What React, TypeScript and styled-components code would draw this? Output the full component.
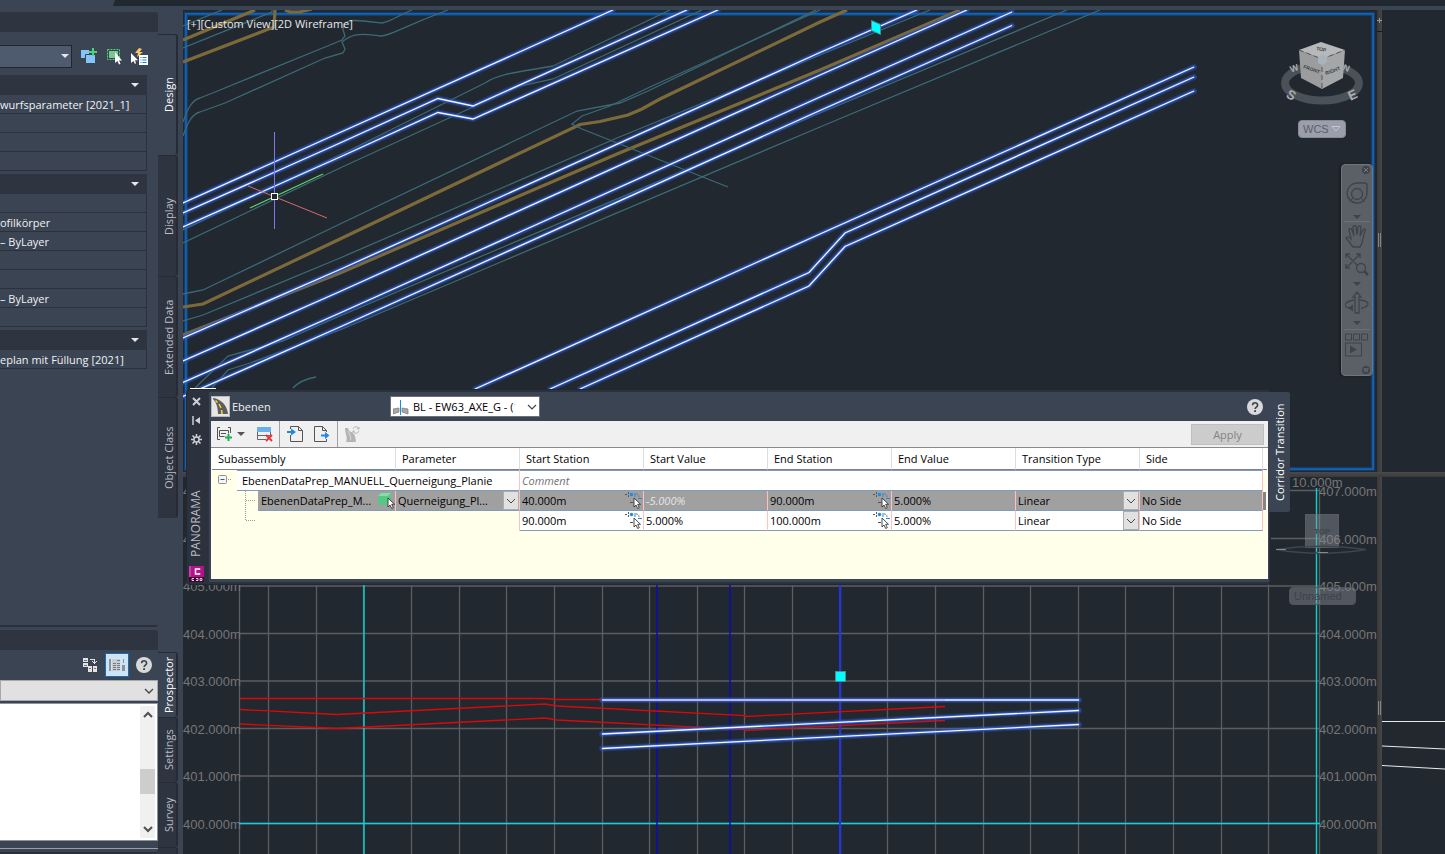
import React from "react";
import styled, { createGlobalStyle, css } from "styled-components";

const c = {
  panel: "#3b4453",
  dark: "#2e3440",
  canvas: "#222830",
  line: "#2b313c",
  text: "#f0f1f3",
  dim: "#b9bdc4",
};

const Global = createGlobalStyle`
  * { box-sizing: border-box; }
  body { margin: 0; background: ${c.panel}; font-family: "Open Sans", "Noto Sans", sans-serif; font-size: 11px; color: ${c.text}; }
  button, select { font: inherit; color: inherit; border: 0; background: none; padding: 0; margin: 0; }
  svg { display: block; }
`;

const Shell = styled.div`
  display: grid;
  grid-template-columns: 183px minmax(0, 1fr);
  grid-template-rows: 10px minmax(0, 1fr);
  height: 100vh;
  overflow: hidden;
`;
const TopStrip = styled.header`
  grid-column: 1 / -1;
  height: 6px;
  margin-left: 113px;
  background: ${c.canvas};
  clip-path: polygon(2px 0, 100% 0, 100% 100%, 0 100%);
`;

/* ---------- docked palettes ---------- */
const Dock = styled.aside`
  display: flex;
  flex-direction: column;
  gap: 3px;
  padding-top: 2px;
  min-height: 0;
`;
const Palette = styled.section<{ $grow?: boolean }>`
  display: grid;
  grid-template-columns: 158px 20px;
  min-height: 0;
  ${(p) => (p.$grow ? "flex: 1;" : "height: 224px;")}
`;
const PaletteBody = styled.div`
  display: flex;
  flex-direction: column;
  min-width: 0;
  border-bottom: 2px solid ${c.line};
  border-bottom-right-radius: 3px;
`;
const TitleBar = styled.div`
  height: 20px;
  flex: none;
  background: ${c.dark};
  border-top-right-radius: 3px;
`;
const Tabs = styled.div`
  display: flex;
  flex-direction: column;
  padding-top: 22px;
  min-height: 0;
  overflow: hidden;
`;
const Tab = styled.button<{ $on?: boolean; $h: number }>`
  flex: none;
  height: ${(p) => p.$h}px;
  display: flex;
  align-items: center;
  justify-content: center;
  padding-right: 4px;
  writing-mode: vertical-rl;
  transform: rotate(180deg);
  line-height: 18px;
  white-space: nowrap;
  color: ${(p) => (p.$on ? "#fff" : c.dim)};
  background: ${(p) => (p.$on ? c.panel : c.dark)};
  border: solid #262b35;
  border-width: 0 0 1px 2px;
  border-radius: 3px 0 0 3px;
`;
const ObjectTools = styled.div`
  display: flex;
  align-items: center;
  justify-content: flex-end;
  height: 43px;
  flex: none;
  gap: 9px;
  padding: 5px 11px 0 0;
`;
const ItemTools = styled.div`
  display: flex;
  align-items: center;
  justify-content: flex-end;
  height: 30px;
  flex: none;
  gap: 7px;
  padding-right: 6px;
`;
const IconButton = styled.button<{ $w?: number; $h?: number }>`
  display: grid;
  place-items: center;
  flex: none;
  width: ${(p) => p.$w ?? 16}px;
  height: ${(p) => p.$h ?? 16}px;
`;
const ObjectSelect = styled.select`
  flex: 1;
  min-width: 0;
  height: 23px;
  appearance: none;
  border: 1px solid #20252e;
  border-left: 0;
  background: #4e5a6d;
`;
const SelectWrap = styled.label`
  position: relative;
  display: flex;
  flex: 1;
  min-width: 0;
  svg { position: absolute; right: 2px; top: 50%; margin-top: -5px; pointer-events: none; }
`;
const Groups = styled.div`
  display: flex;
  flex-direction: column;
  gap: 3px;
  width: 147px;
`;
const GroupHead = styled.button`
  display: flex;
  width: 100%;
  height: 20px;
  align-items: center;
  justify-content: flex-end;
  padding-right: 7px;
  background: ${c.dark};
`;
const PropRow = styled.div`
  height: 19px;
  line-height: 19px;
  overflow: hidden;
  white-space: nowrap;
  border-bottom: 1px solid ${c.line};
  border-right: 1px solid ${c.line};
`;
const Toggle = styled(IconButton)`
  background: #cce4f7;
  border: 1px solid #1b6ab0;
`;
const ViewSelect = styled.select`
  width: 100%;
  height: 21px;
  appearance: none;
  border: 1px solid #a8a8a8;
  background: #e1e1e1;
`;
const ViewSelectWrap = styled(SelectWrap)`
  flex: none;
  svg { right: 4px; }
`;
const Tree = styled.div`
  display: flex;
  justify-content: flex-end;
  height: 138px;
  margin: 2px 0 7px;
  padding: 2px;
  background: #fff;
  border: solid #8d929b;
  border-width: 1px 1px 1px 0;
`;
const Scroll = styled.div`
  display: flex;
  flex-direction: column;
  align-items: center;
  justify-content: space-between;
  width: 15px;
  background: #f0f0f0;
`;
const Thumb = styled.div`
  width: 15px;
  height: 25px;
  margin-top: 18px;
  background: #cdcdcd;
`;
const Below = styled.div`
  flex: 1;
  border-top: 1px solid #9a9ea6;
`;

/* ---------- drawing area ---------- */
const Workspace = styled.main`
  position: relative;
  display: grid;
  grid-template-columns: minmax(0, 1fr) 5px 63px;
  grid-template-rows: minmax(0, 462fr) 5px minmax(0, 377fr);
  min-height: 0;
  background: ${c.canvas};
`;
const View = styled.section`
  position: relative;
  min-width: 0;
  min-height: 0;
  overflow: hidden;
`;
const Drawing = styled.svg`
  position: relative;
  width: 100%;
  height: 100%;
`;
const ActiveFrame = styled.div`
  position: absolute;
  inset: 2px 2px 1px 1px;
  border: 1px solid #143c66;
  background: ${c.canvas};
  box-shadow: inset 0 0 0 1px #1263b8, inset 0 0 0 2px #1259a4, inset 0 0 0 3px #173f66;
`;
const ViewLabels = styled.div`
  position: absolute;
  top: 5px;
  left: 4px;
  display: flex;
  line-height: 18px;
  color: #e6e8ea;
`;
const Splitter = styled.div<{ $row?: boolean }>`
  display: flex;
  justify-content: center;
  ${(p) =>
    p.$row
      ? css`grid-column: 1 / -1; background: linear-gradient(#4a4a4a, #3a3a3a);`
      : css`position: relative; background: linear-gradient(90deg, #383838, #474747);`}
`;
const SplitHandle = styled.svg`
  position: absolute;
  top: 0;
  left: 0;
`;
const Grip = styled.i<{ $at: number }>`
  margin-top: ${(p) => p.$at}px;
  width: 3px;
  height: 14px;
  border: solid #858585;
  border-width: 0 1px;
`;
const CubeBox = styled.div<{ $top: number; $right: number }>`
  position: absolute;
  top: ${(p) => p.$top}px;
  right: ${(p) => p.$right}px;
`;
const CoordButton = styled.button<{ $faint?: boolean; $top: number; $right: number; $w: number }>`
  position: absolute;
  top: ${(p) => p.$top}px;
  right: ${(p) => p.$right}px;
  width: ${(p) => p.$w}px;
  height: 18px;
  display: flex;
  align-items: center;
  justify-content: space-between;
  padding: 0 4px;
  border-radius: 4px;
  font-family: "Liberation Sans", Arial, sans-serif;
  font-size: 11px;
  color: ${(p) => (p.$faint ? "#3d434b" : "#5b5e69")};
  background: ${(p) => (p.$faint ? "rgba(140,145,152,.45)" : "#9b9eab")};
  border: 1px solid ${(p) => (p.$faint ? "#50555c" : "#868996")};
`;
const NavBar = styled.nav`
  position: absolute;
  top: 154px;
  right: 4px;
  width: 32px;
  height: 212px;
  display: flex;
  flex-direction: column;
  align-items: center;
  background: #5b6067;
  border: 1px solid #70757c;
  border-radius: 4px;
  box-shadow: -1px 0 2px #14181d;
`;
const NavButton = styled.button<{ $h: number; $rule?: boolean }>`
  width: 26px;
  height: ${(p) => p.$h}px;
  display: flex;
  justify-content: center;
  align-items: center;
  ${(p) => p.$rule && "border-top: 1px solid #6b6f76;"}
`;
const NavEnd = styled.button`
  align-self: flex-end;
  width: 10px;
  height: 10px;
  margin: 0 1px;
`;

/* ---------- floating panorama window ---------- */
const Panorama = styled.section`
  position: absolute;
  top: 379px;
  left: 3px;
  right: 155px;
  display: flex;
  align-items: flex-start;
  color: #000;
`;
const Frame = styled.div`
  flex: 1;
  min-width: 0;
  display: flex;
  height: 196px;
  padding: 2px 1px 2px 0;
  background: #2c323d;
  border: 1px solid #222730;
  border-radius: 4px;
`;
const Rail = styled.div`
  width: 22px;
  display: flex;
  flex-direction: column;
  align-items: center;
  padding-right: 4px;
`;
const RailTitle = styled.div`
  flex: 1;
  display: flex;
  align-items: center;
  padding-top: 9px;
  writing-mode: vertical-rl;
  transform: rotate(180deg);
  font-size: 12px;
  line-height: 18px;
  color: ${c.dim};
`;
const Win = styled.div`
  flex: 1;
  min-width: 0;
  display: flex;
  flex-direction: column;
  padding: 0 1px 3px 2px;
  background: ${c.panel};
`;
const WinHead = styled.div`
  display: flex;
  align-items: center;
  height: 29px;
  padding-right: 5px;
`;
const WinTitle = styled.h1`
  width: 158px;
  margin: 0 0 0 2px;
  font-size: 11px;
  font-weight: 400;
  color: ${c.text};
`;
const BaselineWrap = styled(SelectWrap)`
  flex: none;
  svg:first-child { right: auto; left: 3px; margin-top: -7px; }
  svg:last-child { right: 3px; }
`;
const Baseline = styled.select`
  width: 150px;
  height: 21px;
  padding: 0 24px 0 22px;
  appearance: none;
  background: #fff;
  border: 1px solid #707070;
  color: #000;
`;
const Spacer = styled.span`flex: 1;`;
const Bar = styled.div`
  display: flex;
  align-items: center;
  height: 27px;
  flex: none;
  padding: 0 4px;
  background: #f0f0f0;
  border-bottom: 1px solid #8a8a8a;
`;
const Rule = styled.i<{ $r: number }>`
  align-self: stretch;
  width: 1px;
  margin: 0 ${(p) => p.$r}px 0 0;
  background: #a0a0a0;
`;
const Apply = styled.button`
  width: 73px;
  height: 21px;
  background: #cccccc;
  border: 1px solid #bfbfbf;
  color: #838383;
`;
const Sheet = styled.div`
  flex: 1;
  background: #ffffea;
  border: solid #fff;
  border-width: 0 1px;
`;
const Table = styled.table`
  width: 100%;
  table-layout: fixed;
  border-collapse: separate;
  border-spacing: 0;
  th { height: 22px; padding: 0 0 1px 6px; text-align: left; font-weight: 400; background: #fff; border-right: 1px solid #dedede; border-bottom: 1px solid #7c8288; white-space: nowrap; }
  th:last-child { border-right: 0; }
  td { height: 20px; padding: 0; line-height: 19px; vertical-align: top; }
`;
const Cell = styled.td<{ $gray?: boolean; $top?: boolean }>`
  background: ${(p) => (p.$gray ? "#a0a0a0" : "#fff")};
  border-bottom: 1px solid #7f9db9;
  border-right: 1px solid #ffc0c0;
  ${(p) => p.$top && "border-top: 1px solid #7f9db9;"}
`;
const CellFlow = styled.div`
  display: flex;
  align-items: center;
  height: 19px;
  padding-left: 2px;
  white-space: nowrap;
  overflow: hidden;
`;
const Grow = styled.span`
  flex: 1;
  min-width: 0;
  overflow: hidden;
`;
const Muted = styled.em<{ $light?: boolean }>`
  color: ${(p) => (p.$light ? "#e6e6e6" : "#707070")};
`;
const TreeCell = styled.td`
  border-right: 1px solid #ffc0c0;
`;
const TreeFlow = styled.div<{ $root?: boolean }>`
  display: flex;
  height: ${(p) => (p.$root ? 21 : 20)}px;
`;
const NodeName = styled.div<{ $gray?: boolean }>`
  flex: 1;
  min-width: 0;
  display: flex;
  align-items: center;
  padding-left: ${(p) => (p.$gray ? 3 : 5)}px;
  white-space: nowrap;
  background: ${(p) => (p.$gray ? "#a0a0a0" : "#fff")};
  border: solid #7f9db9;
  border-width: ${(p) => (p.$gray ? 0 : 1)}px 0 1px;
`;
const CellSelectWrap = styled.label`
  position: relative;
  display: block;
  height: 19px;
`;
const CellSelect = styled.select`
  width: 100%;
  height: 19px;
  padding: 0 18px 0 2px;
  appearance: none;
`;
const Drop = styled.span`
  position: absolute;
  top: 0;
  right: 0;
  width: 16px;
  height: 19px;
  display: grid;
  place-items: center;
  pointer-events: none;
  background: #e1e1e1;
  border: 1px solid #adadad;
`;
const SideThumb = styled.td`
  background: linear-gradient(#858585, #858585) 0 1px / 3px 18px no-repeat;
`;
const SideTab = styled.button`
  width: 21px;
  height: 120px;
  margin: 3px 0 0 -2px;
  writing-mode: vertical-rl;
  transform: rotate(180deg);
  line-height: 16px;
  white-space: nowrap;
  color: #fff;
  background: ${c.panel};
  border-radius: 2px 0 0 2px;
`;

/* ---------- icons ---------- */
const Caret = ({ fill = "#e4e6ea" }: { fill?: string }) => (
  <svg width="10" height="10"><path d="M1 3h8L5 7z" fill={fill} /></svg>
);
const Chevron = ({ k = "#444", up = false, w = 1 }: { k?: string; up?: boolean; w?: number }) => (
  <svg width="10" height="10"><path d={up ? "M1 7l4-4 4 4" : "M1 3l4 4 4-4"} fill="none" stroke={k} strokeWidth={w} /></svg>
);
const Help = () => (
  <svg width="16" height="16" viewBox="0 0 16 16">
    <circle cx="8" cy="8" r="8" fill="#d9d9d9" />
    <path d="M5.6 6.2c0-3.2 5-3.2 5 0 0 1.900-2.500 1.900-2.500 3.900" fill="none" stroke="#3b4453" strokeWidth="1.600" />
    <rect x="7.200" y="11.200" width="1.800" height="1.800" fill="#3b4453" />
  </svg>
);
const Cursor = ({ x = 0, y = 0 }: { x?: number; y?: number }) => (
  <path transform={`translate(${x} ${y})`} d="M0 0v9l2-2 1.700 3.500 1.600-.8L3.700 6.300h2.800z" fill="#fff" stroke="#222" strokeWidth=".8" />
);
const PickAdd = () => (
  <svg width="17" height="17">
    <path d="M0 2h8v8H0z" fill="#84c5f7" />
    <path d="M4.500 6.500h10v9h-10z" fill="#84c5f7" stroke={c.panel} />
    <path d="M12 0v8M8 4h8" stroke="#4fd07c" strokeWidth="2" />
  </svg>
);
const QuickSelect = () => (
  <svg width="17" height="17">
    <rect x="1.500" y="1.500" width="12" height="10" fill="none" stroke="#4fd07c" strokeDasharray="2 1" />
    <rect x="3" y="3" width="9" height="7" fill="#77c98f" />
    <path d="M9 4v11l2.500-2 1.500 3.500 1.500-.8-1.500-3.200h3z" fill="#fff" />
  </svg>
);
const FilterSelect = () => (
  <svg width="17" height="17">
    <path d="M8 0L4 5h3l-1 4 6-5H8.500L11 1z" fill="#f6c76b" />
    <path d="M0 5v10l2.500-2 1.500 3 1-.8-1-3h3z" fill="#fff" />
    <rect x="8" y="7" width="9" height="10" fill="#fff" />
    <path d="M9.500 9.500h1m1 0h4m-6 2.500h1m1 0h4m-6 2.500h1m1 0h4" stroke="#1e7fd0" />
  </svg>
);
const Hierarchy = () => (
  <svg width="16" height="16" shapeRendering="crispEdges">
    <path d="M1 1h5v4H1zM1 6h5v4H1zM6 9h4v6H6zM11 9h4v6h-4z" fill="#e4e4e4" />
    <path d="M2 3h3M2 8h3M7 11h2M12 11h2" stroke="#777" />
    <path d="M8 2.500h4.500V6M10.500 4.500l2 2 2-2" fill="none" stroke="#e4e4e4" />
  </svg>
);
const PreviewIcon = () => (
  <svg width="17" height="14" shapeRendering="crispEdges">
    <path d="M0 1h2v12H0zM13 7h3v6h-3zM14 1h1v4h-1z" fill="#8f9194" />
    <path d="M3 1h8v12H3z" fill="#c9ccd0" />
    <path d="M4 5.500h3m1 0h3M4 7.500h3m1 0h3M4 9.500h3m1 0h3M4 11.500h3m1 0h3M8 2.500h3" stroke="#777a80" />
  </svg>
);
const RailX = () => <svg width="9" height="9"><path d="M1 1l7 7M8 1L1 8" stroke="#ced1d6" strokeWidth="2" /></svg>;
const RailPin = () => <svg width="9" height="9"><path d="M1 0v9" stroke="#ced1d6" strokeWidth="1.500" /><path d="M8 1v7L3 4.500z" fill="#ced1d6" /></svg>;
const RailGear = () => (
  <svg width="11" height="11"><circle cx="5.500" cy="5.500" r="2.500" fill="none" stroke="#ced1d6" strokeWidth="1.400" /><path d="M5.500 0v3M5.500 8v3M0 5.500h3M8 5.500h3M1.500 1.500l2.200 2.200M9.500 1.500L7.300 3.700M1.500 9.500l2.200-2.200M9.500 9.500L7.300 7.300" stroke="#ced1d6" strokeWidth="1.500" /></svg>
);
const C3D = () => (
  <svg width="15" height="16">
    <rect width="14" height="11" x="1" fill="#b5128a" />
    <rect y="11" width="15" height="5" fill="#3c0831" /><rect width="2" height="11" fill="#d03aa8" />
    <path d="M10.500 4V3h-4v5h4V7" fill="none" stroke="#fff" strokeWidth="1.500" />
    <path d="M3 12.500h2m-2 0v2h2M7 12.500h2v2H7M11 12.500h2v2h-2z" fill="none" stroke="#fff" strokeWidth=".8" />
  </svg>
);
const Road = () => (
  <svg width="19" height="21">
    <rect x=".5" y=".5" width="18" height="20" fill="#e6e6e6" stroke="#b9b9b9" />
    <path d="M2 2c8 1 14 7 15 16H7C7 11 5 6 2 3z" fill="#5e5e5e" />
    <path d="M4.500 4.500l2 2M8 8l2 4M10.500 14l.5 4" stroke="#f7cf2d" strokeWidth="1.600" />
  </svg>
);
const BaselineIcon = () => (
  <svg width="16" height="15">
    <path d="M0 9l6-1v4l-6 2zM9 8l6 1v5l-6-2z" fill="#a8a8a8" stroke="#777" strokeWidth=".7" />
    <path d="M7.500 0v15" stroke="#1e88e5" />
  </svg>
);
const AddSet = () => (
  <svg width="17" height="16">
    <path d="M4 1.500H1.500v12H4M12 1.500h2.500V7M3.500 4.500h9M12.500 4.500v3M3.500 4.500v6h5M5 7.500h5" fill="none" stroke="#555" />
    <path d="M12.500 8v7M9 11.500h7" stroke="#22ad52" strokeWidth="2" />
  </svg>
);
const RemoveRow = () => (
  <svg width="17" height="16">
    <path d="M1 1h14v5H1z" fill="#69b1e8" />
    <path d="M1.500 6v7.500H10M1.500 9.500h13V6" fill="none" stroke="#666" />
    <path d="M10 9l6 6M16 9l-6 6" stroke="#ea2f3b" strokeWidth="1.800" />
  </svg>
);
const PageIcon = ({ out = false }: { out?: boolean }) => (
  <svg width="18" height="16">
    <path d={out ? "M1.500.5h8l4 4V6M1.500.5v15h12V13M9.500.5v4h4" : "M3.500 3V.5h8l4 4v11h-12V9M11.500.5v4h4"} fill="none" stroke="#555" />
    <path d={out ? "M8 8.500h4V6l4.500 3.500L12 13v-2.500H8z" : "M0 5h4V2.500L9 6 4 9.500V7H0z"} fill="#1e88e5" />
  </svg>
);
const RoadSync = () => (
  <svg width="17" height="17">
    <path d="M1 2h3c1 5 5 3 7 8l1 6H2c2-5-1-8-1-14z" fill="#b4b4b4" />
    <path d="M4 5l2 4 1 5" stroke="#dcdcdc" fill="none" />
    <path d="M9 3c1-3 5-3 6 0m0-2v2h-2M15 5c-1 3-5 3-6 0m0 2V5h2" fill="none" stroke="#b4b4b4" />
  </svg>
);
const StationPick = () => (
  <svg width="18" height="17">
    <path d="M0 2.500h3M3.500 0v5" stroke="#555" strokeDasharray="2 1" />
    <circle cx="6.500" cy="2.500" r="1.700" fill="#1e88e5" />
    <path d="M10 1v4" stroke="#1e88e5" /><path d="M11 2c3 0 3 2 3 4" fill="none" stroke="#777" strokeDasharray="2 1" />
    <path d="M13 6.500h4" stroke="#1e88e5" /><path d="M5 10.500h3" stroke="#555" />
    <Cursor x={9} y={6} />
  </svg>
);
const GreenPick = () => (
  <svg width="17" height="17">
    <path d="M0 4l3-3h10v9l-3 3H0z" fill="#57c785" /><path d="M0 4l3-3h10l-3 3z" fill="#86dca6" />
    <Cursor x={10} y={6} />
  </svg>
);
const Minus = () => (
  <svg width="13" height="10">
    <rect x=".5" y=".5" width="8" height="8" rx="1" fill="#f5f5f5" stroke="#919191" /><path d="M2.500 4.500h4" stroke="#3557a8" /><path d="M10 4.500h3" stroke="#999" strokeDasharray="1 1" />
  </svg>
);

/* ---------- drawing content ---------- */
const brown = [
  "M183 307L203 304 340 239 580 124.500 600 121.500 628 115 642 109 660 99 820 22 847 10",
  "M183 335L340 273 617 154 820 70 960 10",
  "M183 40L255 10", "M183 62L274 27 275 10", "M285 10L290 12 300 12 312 9",
];
const teal = [
  "M183 48L272 12V10", "M183 26L222 10",
  "M183 122C188 108 192 100 200 98L215 92 330 45 342 40 345 36 343 30 344 24C350 19 356 20 382 23 390 22 395 17 412 10",
  "M183 136C188 122 192 114 200 112L225 103 325 58 343 53 345 49 342 42C350 36 355 32 381 36 392 35 395 30 448 10",
  "M183 243L340 168 473 107 520 86 553 79 702 10",
  "M183 230L340 155 485 83C500 73 520 72 553 66L670 10",
  "M183 294L203 290 340 224 577 111 620 103 648 91 816 10",
  "M728 187L582 129 572 124 582 116 610 106 650 87 820 10",
  "M183 321L203 315 340 258 617 138 820 55 930 10",
  "M195 388L228 356 250 350 283 341 340 316 820 113 1067 10",
  "M212 388L228 370 250 363 340 330 820 127 1100 10",
  "M293 388Q300 380 316 377",
];
const glow = [
  "M183 203L340 132.500 613 10", "M183 213L340 143 438 98.500 473 106 687 10", "M183 227L340 157 438 112.500 473 119 718 10",
  "M183 338L340 269.500 820 52.500 917 10", "M183 361L340 291.500 820 75 967 10", "M183 382.500L340 313 820 97 1012 12", "M183 396.500L340 327 820 110.500 1012 25.500",
  "M475 389L820 234 1194 67", "M550 389L809 272.500 845 233 1194 77", "M580 389L809 286 845 246.500 1194 91",
];
const Glow = ({ paths }: { paths: string[] }) => (
  <g fill="none">
    {paths.map((d) => (
      <g key={d}>
        <path d={d} stroke="#2a5ad0" strokeWidth="6" opacity=".35" strokeLinecap="round" />
        <path d={d} stroke="#2d5cd0" strokeWidth="3.500" opacity=".75" strokeLinecap="round" />
        <path d={d} stroke="#f2f6ff" strokeWidth="1.300" />
      </g>
    ))}
  </g>
);
const PlanDrawing = () => (
  <Drawing viewBox="183 10 1194 462" preserveAspectRatio="xMinYMin slice">
    <g fill="none" stroke="#7d6a3b" strokeWidth="3.200">{brown.map((d) => <path key={d} d={d} />)}</g>
    <g fill="none" stroke="#3b6a76" strokeWidth="1.300">{teal.map((d) => <path key={d} d={d} />)}</g>
    <Glow paths={glow} />
    <path d="M190 388.500H216" stroke="#fff" />
    <path d="M274.500 132V229" stroke="#7b78f0" />
    <path d="M248 186L327 218" stroke="#d76a70" /><path d="M250 208L323 174" stroke="#69d469" strokeWidth="1.200" />
    <rect x="271.500" y="193.500" width="6" height="6" fill={c.canvas} stroke="#fff" />
    <path d="M871.500 20.500L880.500 24.500V34.500L871.500 30.500z" fill="#00ffff" stroke="#4d8f90" />
  </Drawing>
);
const rowsY = [490.5, 538.5, 586, 633.5, 681, 728.5, 776, 823.5];
const colsX = Array.from({ length: 22 }, (_, i) => Math.round(268.1 + i * 47.63) + 0.5);
const ProfileDrawing = () => (
  <Drawing viewBox="183 477 1194 377" preserveAspectRatio="xMinYMin slice">
    <g stroke="#5c5d5f" strokeWidth="1.300">
      <path d="M239.500 477V854M1319.500 488V854" />
      {colsX.map((x) => <path key={x} d={`M${x} 477V854`} />)}
      {rowsY.map((y) => <path key={y} d={`M239 ${y}H1320`} />)}
    </g>
    <g fill="#767676" fontFamily="Liberation Sans, Arial, sans-serif" fontSize="13">
      {rowsY.map((y, i) => (
        <React.Fragment key={y}>
          <text x="183" y={y + 5}>{407 - i}.000m</text>
          <text x="1319" y={y + 5}>{407 - i}.000m</text>
        </React.Fragment>
      ))}
      <text x="1292" y="487">10.000m</text>
    </g>
    <g stroke="#0fd0d6" strokeWidth="1.400"><path d="M364 477V854M1316.500 488V854M239 823.500H1320" /></g>
    <path d="M657 477V854M730 477V854" stroke="#0b0bb0" strokeWidth="1.500" />
    <path d="M840 477V854" stroke="#2233f0" strokeWidth="2" />
    <g fill="none" stroke="#dc0808" strokeWidth="1.300">
      <path d="M240 698.500H545L557 699.500H602" />
      <path d="M240 709.500L337 714.500 545 704 557 706 745 715.500V716.500L945 706.500" />
      <path d="M240 724L337 728.500 545 718 557 720 745 729.500V730.500L945 720.500" />
    </g>
    <Glow paths={["M602 700H1079", "M602 734L1079 710.500", "M602 748.500L1079 724.500"]} />
    <path d="M602 700H945" stroke="#b9a0dc" />
    <rect x="835.500" y="671.500" width="10" height="10" fill="#00ffff" stroke="#4d8f90" />
  </Drawing>
);
const SectionDrawing = () => (
  <Drawing viewBox="1382 477 63 377" preserveAspectRatio="xMinYMin slice">
    <path d="M1382 721.500H1445M1382 746L1445 749M1382 765.500L1445 769" stroke="#e8e8e8" fill="none" strokeWidth="1.200" />
  </Drawing>
);
const ViewCube = () => (
  <svg width="84" height="68" viewBox="1280 40 84 68">
    <ellipse cx="1322" cy="83" rx="37" ry="17.500" fill="none" stroke="#4b5159" strokeWidth="8" />
    <g fill="#a9acb0" fontFamily="Liberation Sans, Arial, sans-serif" fontWeight="700" fontSize="13">
      <text x="1287" y="100" transform="rotate(30 1292 95)">S</text>
      <text x="1348" y="99" transform="rotate(-25 1353 94)">E</text>
      <text x="1290" y="71" fontSize="9" transform="rotate(-20 1295 68)">W</text>
      <text x="1343" y="71" fontSize="9" transform="rotate(20 1346 68)">N</text>
    </g>
    <path d="M1299 50L1322 59V89L1301 78z" fill="#9a9c9e" /><path d="M1322 59L1345 50 1343 78 1322 89z" fill="#a4a6a8" />
    <path d="M1321 42L1345 50 1322 59 1299 50z" fill="#b6b8ba" />
    <path d="M1299 50L1322 59 1345 50M1322 59V89" fill="none" stroke="#55585c" strokeDasharray="5 3" />
    <path d="M1318 57l4-2 5 2v5l-5 3-4-2z" fill="#a8b4bc" />
    <g fill="#3d4146" fontFamily="Liberation Sans, Arial, sans-serif" fontSize="5" fontWeight="700">
      <text x="1303" y="68" transform="rotate(20 1303 68)">FRONT</text>
      <text x="1326" y="75" transform="rotate(-20 1326 75)">RIGHT</text>
      <text x="1316" y="51" transform="rotate(12 1321 50)">TOP</text>
    </g>
  </svg>
);
const TopCube = () => (
  <svg width="92" height="42" viewBox="1274 512 92 42">
    <rect x="1305.500" y="514.500" width="33" height="33" fill="#8b9096" fillOpacity=".45" stroke="#6c7177" strokeOpacity=".6" />
    <text x="1314" y="534" fontSize="8" fontWeight="700" fontFamily="Liberation Sans, Arial, sans-serif" fill="#41464c">TOP</text>
    <path d="M1276 549.500Q1320 543 1366 549.500Q1320 557 1276 549.500" fill="none" stroke="#3f454c" strokeWidth="1.500" />
    <path d="M1276 549.500h10M1318 552.500h10" stroke="#858a90" />
  </svg>
);
const k = "#3e4349";
const Wheel = () => <svg width="24" height="24"><path d="M12 1h8q2 0 2 2v9A10 10 0 1 1 12 1z" fill="none" stroke={k} strokeWidth="1.300" /><circle cx="12" cy="12" r="5.500" fill="none" stroke={k} strokeWidth="1.300" /><path d="M8 16l-4 4M16 16l4 4" stroke={k} /></svg>;
const Hand = () => <svg width="24" height="24"><path d="M8 22C5 18 3 15 1 13c1-2 3-1 5 1L4 5c0-2 2-2 3 0l2 6-1-9c0-2 3-2 3 0l1 8 1-8c1-2 3-1 3 0l-1 9 3-6c1-2 3-1 2 1-2 5-2 12-5 16z" fill="none" stroke={k} strokeWidth="1.300" /></svg>;
const ZoomIcon = () => <svg width="24" height="24"><path d="M1 1l14 14M15 1L1 15M1 5V1h4M11 1h4v4M1 11v4h4" fill="none" stroke={k} strokeWidth="1.300" /><circle cx="16" cy="15" r="4.500" fill="#5b6067" stroke={k} strokeWidth="1.300" /><path d="M19 18l4 4" stroke={k} strokeWidth="2.500" /></svg>;
const Orbit = () => <svg width="24" height="24"><path d="M10 22V6H8l4-5 4 5h-2v16zM9 9C-2 11-2 16 4 17M15 9c10 1 11 6 1 8.500" fill="none" stroke={k} strokeWidth="1.300" /><path d="M8 13.500v7L3 17z" fill={k} /></svg>;
const Motion = () => <svg width="24" height="24"><path d="M.5 1h6v6h-6zM8.500 1h6v6h-6zM16.500 1h6v6h-6zM.5 10h16v13H.5z" fill="none" stroke={k} /><path d="M5 12.500l7 4-7 4z" fill={k} /></svg>;

/* ---------- data ---------- */
const groups: string[][] = [
  ["wurfsparameter [2021_1]", "", "", ""],
  ["", "ofilkörper", "– ByLayer", "", "", "– ByLayer", ""],
  ["eplan mit Füllung [2021]"],
];
const headings = ["Subassembly", "Parameter", "Start Station", "Start Value", "End Station", "End Value", "Transition Type", "Side"];
const widths = [184, 124, 124, 124, 124, 124, 124, 123];
const data = [
  { start: "40.000m", sv: "-5.000%", end: "90.000m", ev: "5.000%", on: true },
  { start: "90.000m", sv: "5.000%", end: "100.000m", ev: "5.000%", on: false },
];

const DropCell = ({ label, value }: { label: string; value: string }) => (
  <CellSelectWrap>
    <CellSelect aria-label={label}><option>{value}</option></CellSelect>
    <Drop><Chevron /></Drop>
  </CellSelectWrap>
);
const StationCell = ({ value }: { value: string }) => (
  <CellFlow><Grow>{value}</Grow><IconButton $w={18} $h={17} aria-label="Pick station"><StationPick /></IconButton></CellFlow>
);

export default function App() {
  return (
    <Shell>
      <Global />
      <TopStrip />
      <Dock>
        <Palette $grow>
          <PaletteBody>
            <TitleBar />
            <ObjectTools>
              <SelectWrap><ObjectSelect aria-label="Object type" /><Caret /></SelectWrap>
              <IconButton aria-label="Toggle pick add"><PickAdd /></IconButton>
              <IconButton aria-label="Select objects"><QuickSelect /></IconButton>
              <IconButton aria-label="Quick select"><FilterSelect /></IconButton>
            </ObjectTools>
            <Groups>
              {groups.map((rows, i) => (
                <div key={i}>
                  <GroupHead aria-label="Collapse group"><Caret /></GroupHead>
                  {rows.map((r, j) => <PropRow key={j}>{r}</PropRow>)}
                </div>
              ))}
            </Groups>
          </PaletteBody>
          <Tabs>
            <Tab $h={121} $on>Design</Tab>
            <Tab $h={121}>Display</Tab>
            <Tab $h={121}>Extended Data</Tab>
            <Tab $h={121}>Object Class</Tab>
          </Tabs>
        </Palette>
        <Palette>
          <PaletteBody>
            <TitleBar />
            <ItemTools>
              <IconButton aria-label="Item view"><Hierarchy /></IconButton>
              <Toggle $w={24} $h={24} aria-label="Preview"><PreviewIcon /></Toggle>
              <IconButton aria-label="Help"><Help /></IconButton>
            </ItemTools>
            <ViewSelectWrap><ViewSelect aria-label="Drawing view" /><Chevron w={1.3} /></ViewSelectWrap>
            <Tree>
              <Scroll>
                <IconButton $h={18} aria-label="Scroll up"><Chevron up w={2} k="#505050" /></IconButton>
                <Thumb />
                <IconButton $h={18} aria-label="Scroll down"><Chevron w={2} k="#505050" /></IconButton>
              </Scroll>
            </Tree>
            <Below />
          </PaletteBody>
          <Tabs>
            <Tab $h={65} $on>Prospector</Tab>
            <Tab $h={65}>Settings</Tab>
            <Tab $h={65}>Survey</Tab>
            <Tab $h={65} aria-label="Toolbox" />
          </Tabs>
        </Palette>
      </Dock>

      <Workspace>
        <View>
          <ActiveFrame />
          <PlanDrawing />
          <ViewLabels>
            <button>[+]</button><button>[Custom View]</button><button>[2D Wireframe]</button>
          </ViewLabels>
          <CubeBox $top={30} $right={13}><ViewCube /></CubeBox>
          <CoordButton $top={110} $right={31} $w={48}>WCS <svg width="10" height="8"><path d="M1 1.500h8L5 6z" fill="none" stroke="#c3c5d0" /></svg></CoordButton>
          <NavBar>
            <NavEnd aria-label="Close"><svg width="10" height="10"><circle cx="5" cy="5" r="4" fill={k} /><path d="M3 3l4 4M7 3L3 7" stroke="#777c83" /></svg></NavEnd>
            <NavButton $h={38} aria-label="Steering wheel"><Wheel /></NavButton>
            <NavButton $h={8} aria-label="More wheels"><Caret fill={k} /></NavButton>
            <NavButton $h={30} $rule aria-label="Pan"><Hand /></NavButton>
            <NavButton $h={28} aria-label="Zoom"><ZoomIcon /></NavButton>
            <NavButton $h={10} aria-label="More zoom"><Caret fill={k} /></NavButton>
            <NavButton $h={28} aria-label="Orbit"><Orbit /></NavButton>
            <NavButton $h={12} aria-label="More orbit"><Caret fill={k} /></NavButton>
            <NavButton $h={30} $rule aria-label="Show motion"><Motion /></NavButton>
            <Spacer />
            <NavEnd aria-label="Options"><svg width="10" height="10"><circle cx="5" cy="5" r="4" fill={k} /><path d="M2.500 4h5M3 6h4" stroke="#777c83" /></svg></NavEnd>
          </NavBar>
        </View>
        <Splitter>
          <SplitHandle width="5" height="23"><path d="M0 10.500h5M2.500 8v5" stroke="#9a9a9a" /><path d="M0 21.500h5" stroke="#1a1a1a" /></SplitHandle>
          <Grip $at={223} />
        </Splitter>
        <View />
        <Splitter $row />
        <View>
          <ProfileDrawing />
          <CubeBox $top={35} $right={11}><TopCube /></CubeBox>
          <CoordButton $faint $top={110} $right={21} $w={67}>Unnamed <Caret fill="#50565e" /></CoordButton>
        </View>
        <Splitter><Grip $at={224} /></Splitter>
        <View><SectionDrawing /></View>

        <Panorama>
          <Frame>
            <Rail>
              <IconButton $h={19} aria-label="Close"><RailX /></IconButton>
              <IconButton $h={19} aria-label="Auto-hide"><RailPin /></IconButton>
              <IconButton $h={19} aria-label="Settings"><RailGear /></IconButton>
              <RailTitle>PANORAMA</RailTitle>
              <C3D />
            </Rail>
            <Win>
              <WinHead>
                <Road />
                <WinTitle>Ebenen</WinTitle>
                <BaselineWrap>
                  <BaselineIcon />
                  <Baseline aria-label="Baseline"><option>BL - EW63_AXE_G - (1)</option></Baseline>
                  <Chevron w={1.2} />
                </BaselineWrap>
                <Spacer />
                <IconButton aria-label="Help"><Help /></IconButton>
              </WinHead>
              <Bar>
                <IconButton $w={18} aria-label="Add transition"><AddSet /></IconButton>
                <IconButton aria-label="Add options"><Caret fill="#555" /></IconButton>
                <IconButton $w={30} aria-label="Delete transition"><RemoveRow /></IconButton>
                <Rule $r={6} />
                <IconButton $w={20} aria-label="Import"><PageIcon /></IconButton>
                <IconButton $w={31} aria-label="Export"><PageIcon out /></IconButton>
                <Rule $r={4} />
                <IconButton $w={20} aria-label="Rebuild corridor" disabled><RoadSync /></IconButton>
                <Spacer />
                <Apply disabled>Apply</Apply>
              </Bar>
              <Sheet>
                <Table>
                  <colgroup>{widths.map((w, i) => <col key={i} width={w} />)}<col /></colgroup>
                  <thead><tr>{headings.map((h) => <th key={h}>{h}</th>)}<th /></tr></thead>
                  <tbody>
                    <tr>
                      <TreeCell colSpan={2}>
                        <TreeFlow $root>
                          <IconButton $w={25} $h={20} aria-label="Collapse"><Minus /></IconButton>
                          <NodeName>EbenenDataPrep_MANUELL_Querneigung_Planie</NodeName>
                        </TreeFlow>
                      </TreeCell>
                      <Cell colSpan={6} $top><CellFlow><Muted>Comment</Muted></CellFlow></Cell>
                      <td />
                    </tr>
                    {data.map((r) => (
                      <tr key={r.start}>
                        {r.on ? (
                          <>
                            <TreeCell>
                              <TreeFlow>
                                <svg width="46" height="20"><path d="M33.500 0V20M34 9.500h9" fill="none" stroke="#999" strokeDasharray="1 1" /></svg>
                                <NodeName $gray><Grow>EbenenDataPrep_M...</Grow><IconButton $w={17} $h={17} aria-label="Pick subassembly"><GreenPick /></IconButton></NodeName>
                              </TreeFlow>
                            </TreeCell>
                            <Cell $gray><DropCell label="Parameter" value="Querneigung_Pl..." /></Cell>
                          </>
                        ) : (
                          <TreeCell colSpan={2}><svg width="46" height="19"><path d="M33.500 0V10M34 9.500h9" fill="none" stroke="#999" strokeDasharray="1 1" /></svg></TreeCell>
                        )}
                        <Cell $gray={r.on}><StationCell value={r.start} /></Cell>
                        <Cell $gray={r.on}><CellFlow>{r.on ? <Muted $light>{r.sv}</Muted> : r.sv}</CellFlow></Cell>
                        <Cell $gray={r.on}><StationCell value={r.end} /></Cell>
                        <Cell $gray={r.on}><CellFlow>{r.ev}</CellFlow></Cell>
                        <Cell $gray={r.on}><DropCell label="Transition type" value="Linear" /></Cell>
                        <Cell $gray={r.on}><CellFlow>No Side</CellFlow></Cell>
                        {r.on ? <SideThumb /> : <td />}
                      </tr>
                    ))}
                  </tbody>
                </Table>
              </Sheet>
            </Win>
          </Frame>
          <SideTab>Corridor Transition</SideTab>
        </Panorama>
      </Workspace>
    </Shell>
  );
}
